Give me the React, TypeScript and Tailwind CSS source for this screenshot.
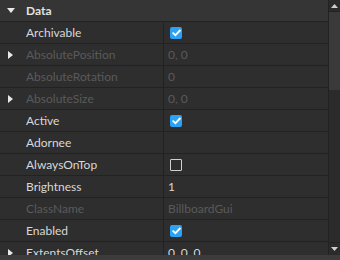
type Prop = {
  name: string;
  value?: string;
  check?: boolean;
  disabled?: boolean;
  expand?: boolean;
};

const PROPS: Prop[] = [
  { name: 'Archivable', check: true },
  { name: 'AbsolutePosition', value: '0, 0', disabled: true, expand: true },
  { name: 'AbsoluteRotation', value: '0', disabled: true },
  { name: 'AbsoluteSize', value: '0, 0', disabled: true, expand: true },
  { name: 'Active', check: true },
  { name: 'Adornee', value: '' },
  { name: 'AlwaysOnTop', check: false },
  { name: 'Brightness', value: '1' },
  { name: 'ClassName', value: 'BillboardGui', disabled: true },
  { name: 'Enabled', check: true },
  { name: 'ExtentsOffset', value: '0, 0, 0', expand: true },
];

function Checkbox({ on }: { on: boolean }) {
  if (!on) {
    return <div className="ml-[2px] h-[12px] w-[12px] rounded-[1px] border border-[#cfcfcf]" />;
  }
  return (
    <div className="ml-[2px] flex h-[12px] w-[12px] items-center justify-center rounded-[2px] bg-[#2da2f5]">
      <svg width="9" height="8" viewBox="0 0 9 8" fill="none">
        <path d="M1.2 4.2 3.4 6.2 7.8 1.6" stroke="#fff" strokeWidth="1.8" strokeLinecap="square" />
      </svg>
    </div>
  );
}

function Row({ p }: { p: Prop }) {
  const color = p.disabled ? 'text-[#5a5a5a]' : 'text-[#d8d8d8]';
  return (
    <div className="flex h-[22px] shrink-0 border-b border-[#222222]">
      <div className="flex w-[164px] shrink-0 items-center overflow-hidden border-r border-[#222222]">
        <div className="flex w-[26px] shrink-0 items-center pl-[8px]">
          {p.expand && (
            <svg width="5" height="8" viewBox="0 0 5 8">
              <path d="M0 0 5 4 0 8Z" fill="#e8e8e8" />
            </svg>
          )}
        </div>
        <span className={`whitespace-nowrap ${color}`}>{p.name}</span>
      </div>
      <div className="flex flex-1 items-center pl-[4px]">
        {p.check !== undefined ? (
          <Checkbox on={p.check} />
        ) : (
          <span className={`whitespace-nowrap ${color}`}>{p.value}</span>
        )}
      </div>
    </div>
  );
}

export default function App() {
  return (
    <div className="flex h-[260px] w-[340px] flex-col overflow-hidden bg-[#2e2e2e] text-[12px] leading-[16px] [font-family:Lato,'Noto_Sans',sans-serif]">
      <div className="flex min-h-0 flex-1">
        <div className="flex min-w-0 flex-1 flex-col overflow-hidden">
          <div className="flex h-[22px] shrink-0 items-center border-b border-[#222222] bg-[#353535]">
            <div className="flex w-[26px] shrink-0 items-center pl-[7px]">
              <svg width="8" height="5" viewBox="0 0 8 5">
                <path d="M0 0h8L4 5Z" fill="#e8e8e8" />
              </svg>
            </div>
            <span className="font-bold text-[#e2e2e2]">Data</span>
          </div>
          {PROPS.map((p) => (
            <Row key={p.name} p={p} />
          ))}
        </div>
        <div className="flex w-[12px] shrink-0 flex-col border-l border-[#222222] bg-[#2b2b2b]">
          <div className="flex h-[12px] shrink-0 items-center justify-center border-b border-[#222222]">
            <svg width="7" height="4" viewBox="0 0 7 4">
              <path d="M3.5 0 7 4H0Z" fill="#cfcfcf" />
            </svg>
          </div>
          <div className="h-[78px] shrink-0 bg-[#3a3a3a]" />
          <div className="flex-1" />
          <div className="flex h-[13px] shrink-0 items-center justify-center border-t border-[#222222]">
            <svg width="7" height="4" viewBox="0 0 7 4">
              <path d="M0 0h7L3.5 4Z" fill="#cfcfcf" />
            </svg>
          </div>
        </div>
      </div>
      <div className="h-[5px] shrink-0 bg-[#3c3c3c]" />
    </div>
  );
}
